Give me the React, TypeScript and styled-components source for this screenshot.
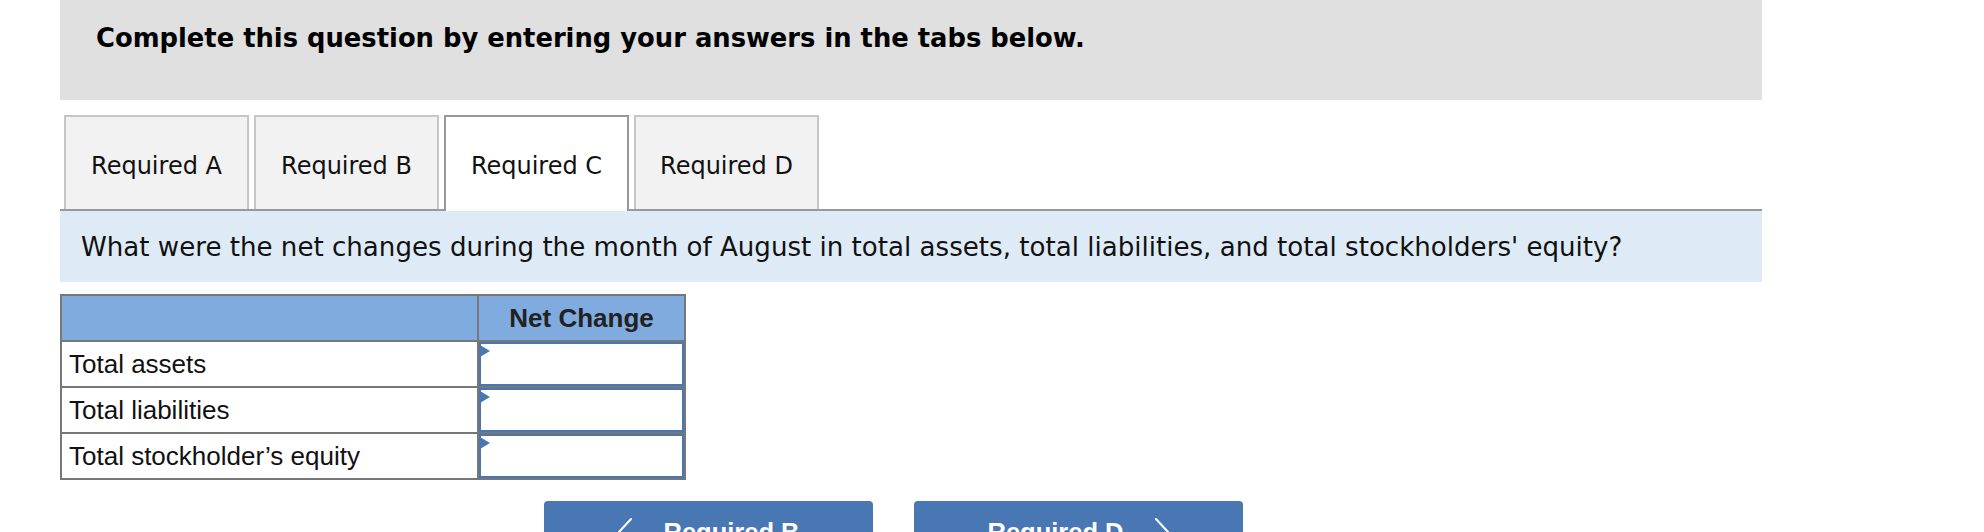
import styled, { createGlobalStyle } from 'styled-components';

const GlobalStyle = createGlobalStyle`
  body {
    margin: 0;
    background: #ffffff;
    font-family: "DejaVu Sans", Verdana, sans-serif;
  }
`;

const Page = styled.div`
  width: 1702px;
  padding-left: 60px;
`;

const Instructions = styled.div`
  height: 100px;
  box-sizing: border-box;
  padding: 23px 36px;
  background: #e0e0e0;
  font-family: "DejaVu Sans", Verdana, sans-serif;
  font-weight: 700;
  font-size: 25.8px;
  line-height: 30px;
  color: #000;
`;

const TabBar = styled.div`
  display: flex;
  align-items: flex-end;
  gap: 5px;
  margin-top: 15px;
  padding-left: 4px;
  border-bottom: 2px solid #999;
`;

const Tab = styled.div<{ $active?: boolean }>`
  width: 185px;
  height: ${(p) => (p.$active ? '96px' : '94px')};
  margin-bottom: ${(p) => (p.$active ? '-2px' : '0')};
  box-sizing: border-box;
  display: flex;
  align-items: center;
  justify-content: center;
  padding-top: 5px;
  padding-bottom: ${(p) => (p.$active ? '2px' : '0')};
  background: ${(p) => (p.$active ? '#ffffff' : '#f2f2f2')};
  border: 2px solid ${(p) => (p.$active ? '#999' : '#c6c6c6')};
  border-bottom: none;
  font-size: 24px;
  color: #111;
  position: relative;
`;

const QuestionBar = styled.div`
  height: 71px;
  display: flex;
  align-items: center;
  padding-left: 21px;
  background: #deebf7;
  font-size: 26.1px;
  color: #111;
`;

const AnswerTable = styled.table`
  margin-top: 12px;
  width: 626px;
  border-collapse: collapse;
  font-family: "Liberation Sans", Arial, sans-serif;
  table-layout: fixed;

  td, th {
    border: 2px solid #777;
    padding: 0;
  }

  tr {
    height: 46px;
  }
`;

const HeadCell = styled.th`
  background: #80abdf;
  font-size: 26px;
  font-weight: 700;
  color: #222;
  text-align: center;
`;

const LabelCell = styled.td`
  padding-left: 7px !important;
  font-size: 26px;
  color: #111;
`;

const InputWrap = styled.div`
  position: relative;
  height: 44px;

  &::before {
    content: '';
    position: absolute;
    left: 1px;
    top: 3px;
    border-left: 10px solid #4a77b4;
    border-top: 6px solid transparent;
    border-bottom: 6px solid transparent;
  }
`;

const AmountInput = styled.input`
  display: block;
  width: 100%;
  height: 100%;
  box-sizing: border-box;
  margin: 0;
  border: 2px solid #4a77b4;
  background: #fff;
  outline: none;
  font-size: 22px;
`;

const ButtonRow = styled.div`
  display: flex;
  gap: 41px;
  margin-top: 21px;
  padding-left: 484px;
`;

const NavButton = styled.button`
  width: 329px;
  height: 62px;
  display: flex;
  align-items: center;
  justify-content: center;
  gap: 30px;
  padding: 0;
  border: none;
  border-radius: 4px;
  background: #4877b4;
  color: #fff;
  font-family: "Liberation Sans", Arial, sans-serif;
  font-weight: 700;
  font-size: 25.5px;
  cursor: pointer;

  svg {
    flex: none;
  }
`;

const Chevron = ({ dir }: { dir: 'left' | 'right' }) => (
  <svg width="16" height="28" viewBox="0 0 16 28" fill="none">
    <path
      d={dir === 'left' ? 'M14 1 L2 14 L14 27' : 'M2 1 L14 14 L2 27'}
      stroke="#fff"
      strokeWidth="2"
      strokeLinecap="round"
      strokeLinejoin="round"
    />
  </svg>
);

const rows = ['Total assets', 'Total liabilities', 'Total stockholder’s equity'];
const tabs = ['Required A', 'Required B', 'Required C', 'Required D'];

export default function App() {
  return (
    <>
      <GlobalStyle />
      <Page>
        <Instructions>Complete this question by entering your answers in the tabs below.</Instructions>
        <TabBar>
          {tabs.map((t) => (
            <Tab key={t} $active={t === 'Required C'}>
              {t}
            </Tab>
          ))}
        </TabBar>
        <QuestionBar>
          What were the net changes during the month of August in total assets, total liabilities, and total
          stockholders' equity?
        </QuestionBar>
        <AnswerTable>
          <colgroup>
            <col style={{ width: 417 }} />
            <col style={{ width: 207 }} />
          </colgroup>
          <thead>
            <tr>
              <HeadCell />
              <HeadCell>Net Change</HeadCell>
            </tr>
          </thead>
          <tbody>
            {rows.map((r) => (
              <tr key={r}>
                <LabelCell>{r}</LabelCell>
                <td>
                  <InputWrap>
                    <AmountInput type="text" aria-label={r} />
                  </InputWrap>
                </td>
              </tr>
            ))}
          </tbody>
        </AnswerTable>
        <ButtonRow>
          <NavButton>
            <Chevron dir="left" />
            Required B
          </NavButton>
          <NavButton>
            Required D
            <Chevron dir="right" />
          </NavButton>
        </ButtonRow>
      </Page>
    </>
  );
}
